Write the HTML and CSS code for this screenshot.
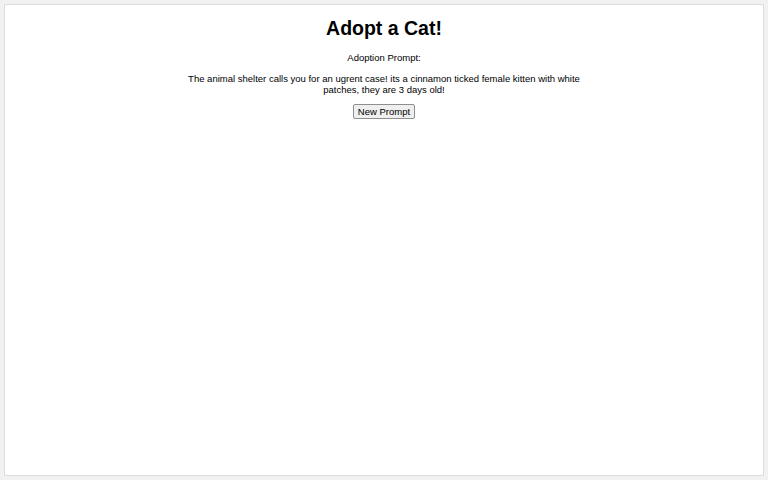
FILE: index.html
```html
<!DOCTYPE html>
<html lang="en">
<head>
<meta charset="utf-8">
<title>Adopt a Cat!</title>
<link rel="stylesheet" href="styles.css">
</head>
<body>
<main class="card">
  <h1 class="title">Adopt a Cat!</h1>
  <p class="label">Adoption Prompt:</p>
  <p class="prompt">The animal shelter calls you for an ugrent case! its a cinnamon ticked female kitten with white patches, they are 3 days old!</p>
  <button class="btn" type="button">New Prompt</button>
</main>
</body>
</html>
```

FILE: styles.css
```css
html, body {
  margin: 0;
  height: 100%;
}

body {
  background: #f1f1f1;
  font-family: "Liberation Sans", Arial, sans-serif;
  color: #000;
  padding: 4px;
  box-sizing: border-box;
}

.card {
  height: 100%;
  box-sizing: border-box;
  background: #fff;
  border: 1px solid #dcdcdc;
  display: flex;
  flex-direction: column;
  align-items: center;
  padding-top: 12px;
}

.title {
  font-size: 19.5px;
  line-height: 23px;
  margin: 0;
}

.label {
  font-size: 9.5px;
  line-height: 12px;
  margin: 12px 0 0;
}

.prompt {
  font-size: 9.5px;
  line-height: 11px;
  max-width: 400px;
  text-align: center;
  margin: 9px 0 0;
}

.btn {
  margin-top: 9px;
  font-family: "Liberation Sans", Arial, sans-serif;
  font-size: 9.5px;
  line-height: 11px;
  padding: 1px 4px;
  background: #efefef;
  border: 1px solid #8f8f8f;
  border-radius: 2px;
  color: #000;
}
```
